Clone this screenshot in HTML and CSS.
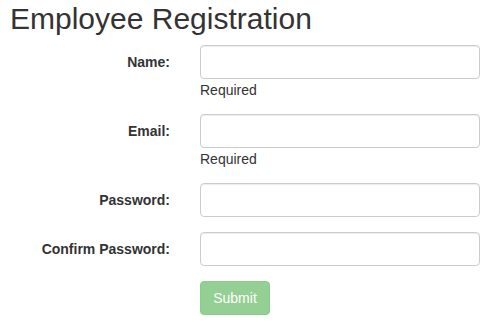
FILE: index.html
```html
<!DOCTYPE html>
<html>
<head>
<meta charset="utf-8">
<link rel="stylesheet" href="styles.css">
</head>
<body>
<h2 class="title">Employee Registration</h2>
<form class="form">
  <div class="row">
    <label class="label" for="name">Name:</label>
    <div class="field">
      <input class="input" id="name" type="text">
      <span class="help">Required</span>
    </div>
  </div>
  <div class="row">
    <label class="label" for="email">Email:</label>
    <div class="field">
      <input class="input" id="email" type="text">
      <span class="help">Required</span>
    </div>
  </div>
  <div class="row">
    <label class="label" for="pw">Password:</label>
    <div class="field">
      <input class="input" id="pw" type="password">
    </div>
  </div>
  <div class="row">
    <label class="label" for="cpw">Confirm Password:</label>
    <div class="field">
      <input class="input" id="cpw" type="password">
    </div>
  </div>
  <div class="row">
    <div></div>
    <div class="field">
      <button class="btn" type="submit" disabled>Submit</button>
    </div>
  </div>
</form>
</body>
</html>
```
FILE: styles.css
```css
html, body {
  margin: 0;
  padding: 0;
  background: #fff;
}
body {
  font-family: "Liberation Sans", Arial, Helvetica, sans-serif;
  font-size: 14px;
  line-height: 20px;
  color: #333;
}
.title {
  margin: 2px 0 10px 10px;
  font-size: 30px;
  line-height: 33px;
  font-weight: normal;
}
.form {
  display: flex;
  flex-direction: column;
  gap: 15px;
  margin: 0;
}
.row {
  display: grid;
  grid-template-columns: 170px 280px;
  column-gap: 30px;
}
.label {
  text-align: right;
  font-weight: bold;
  padding-top: 7px;
  line-height: 20px;
}
.field {
  display: flex;
  flex-direction: column;
  align-items: flex-start;
}
.input {
  box-sizing: border-box;
  width: 280px;
  height: 34px;
  margin: 0;
  padding: 6px 12px;
  border: 1px solid #ccc;
  border-radius: 4px;
  box-shadow: inset 0 1px 1px rgba(0, 0, 0, 0.075);
  font: inherit;
  color: #555;
  background: #fff;
}
.help {
  display: block;
  margin-top: 1px;
  margin-bottom: -1px;
  line-height: 20px;
  color: #333;
}
.btn {
  box-sizing: border-box;
  width: 70px;
  height: 34px;
  padding: 6px 12px;
  margin: 0;
  font: inherit;
  color: #fff;
  background: #5cb85c;
  border: 1px solid #4cae4c;
  border-radius: 4px;
  opacity: 0.65;
}
```
